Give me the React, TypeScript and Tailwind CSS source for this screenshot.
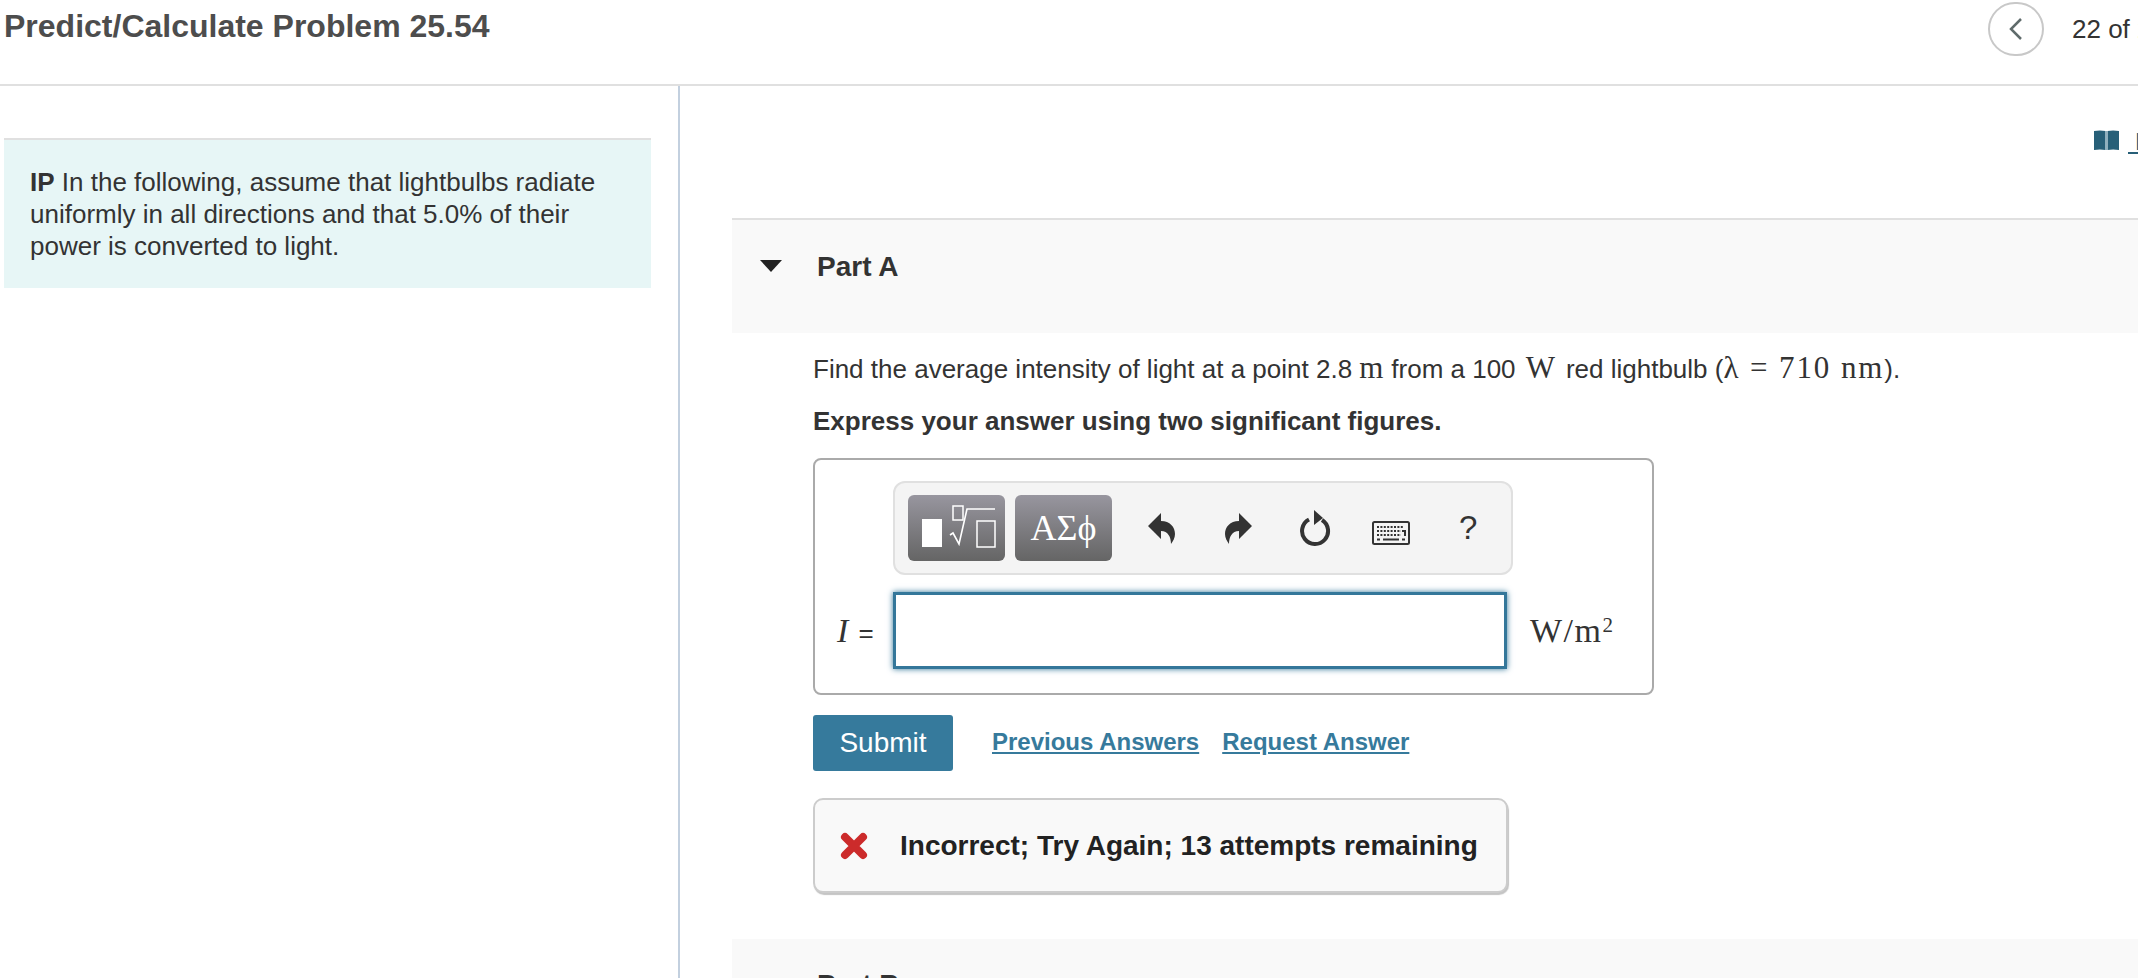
import React from 'react';

const sans = { fontFamily: '"Liberation Sans", Arial, sans-serif' };

const Serif = ({ children, className = '' }: { children: React.ReactNode; className?: string }) => (
  <span className={`font-['Liberation_Serif',serif] text-[31px] tracking-[0.6px] ${className}`}>{children}</span>
);

const UndoIcon = ({ flip = false }: { flip?: boolean }) => (
  <svg width="27" height="31" viewBox="0 0 27 31" className={flip ? '-scale-x-100' : ''}>
    <path d="M0 13 L13 0 L13 8 C22 8 27 14 27 21 C27 25 25 28 23 31 C23 24 20 18 13 18 L13 26 Z" fill="#333" />
  </svg>
);

const RefreshIcon = () => (
  <svg width="32" height="36" viewBox="0 0 32 36">
    <path d="M10 9.5 A13 13 0 1 0 23 10" fill="none" stroke="#333" strokeWidth="4" />
    <path d="M15 0 L24 8 L15 15 Z" fill="#333" />
  </svg>
);

const KeyboardIcon = () => (
  <svg width="38" height="24" viewBox="0 0 38 24">
    <rect x="1" y="1" width="36" height="22" rx="1.5" fill="#f4f4f4" stroke="#333" strokeWidth="2" />
    <path d="M5 6 H32 M5 10 H29 M5 14 H29" stroke="#333" strokeWidth="2" strokeDasharray="2 1.4" />
    <path d="M30 10 H33 V15 M11 18.5 H27 M5 18.5 H8 M30 18.5 H33" stroke="#333" strokeWidth="2" fill="none" />
  </svg>
);

const MathIcon = () => (
  <svg width="97" height="66" viewBox="0 0 97 66">
    <rect x="14" y="24" width="20" height="28" fill="#fff" />
    <rect x="45" y="11" width="10" height="14" fill="none" stroke="#fff" strokeWidth="1.5" />
    <path d="M42 40 L45 38 L51 49 L59 14 H87" fill="none" stroke="#fff" strokeWidth="1.6" />
    <rect x="69" y="26" width="18" height="26" fill="none" stroke="#fff" strokeWidth="1.5" />
  </svg>
);

const CrossIcon = () => (
  <svg width="28" height="28" viewBox="0 0 28 28" className="shrink-0">
    <path d="M5 5 L23 23 M23 5 L5 23" stroke="#cc2b2b" strokeWidth="8" strokeLinecap="round" />
  </svg>
);

const App = () => {
  return (
    <div className="w-[2138px] h-[978px] overflow-hidden bg-white flex flex-col text-[#333]" style={sans}>
      <header className="h-[86px] shrink-0 border-b-2 border-[#e0e0e0] flex items-start justify-between pl-[4px]">
        <h1 className="mt-[9px] text-[32px] leading-[34px] font-bold text-[#4d4d4d] whitespace-nowrap">
          Predict/Calculate Problem 25.54
        </h1>
        <div className="flex items-center shrink-0 w-[150px] mt-[2px]">
          <button className="w-[56px] h-[54px] shrink-0 rounded-full border-2 border-[#c8c8c8] flex items-center justify-center">
            <svg width="16" height="24" viewBox="0 0 16 24">
              <path d="M13 2 L3 12 L13 22" fill="none" stroke="#5f6b6b" strokeWidth="2.5" />
            </svg>
          </button>
          <span className="ml-[28px] text-[26px] whitespace-nowrap">22 of 24</span>
        </div>
      </header>

      <div className="flex flex-1 min-h-0">
        <aside className="w-[680px] shrink-0 border-r-2 border-[#c3d0df] pl-[4px] pr-[27px] pt-[52px]">
          <div className="h-[150px] border-t-2 border-[#e0e0e0] bg-[#e7f6f6] pl-[26px] pr-[40px] pt-[26px] text-[26px] leading-[32px]">
            <b>IP</b> In the following, assume that lightbulbs radiate uniformly in all directions and that 5.0% of their power is converted to light.
          </div>
        </aside>

        <main className="flex-1 min-w-0 pl-[52px] flex flex-col">
          <div className="h-[132px] shrink-0 pt-[44px] flex justify-end items-start">
            <div className="w-[44px] flex items-start gap-[9px] shrink-0">
              <svg width="25" height="20" viewBox="0 0 25 20" className="shrink-0">
                <path d="M0 1 Q6 0 11.5 1 V20 Q6 19 0 20 Z M13.5 1 Q19 0 25 1 V20 Q19 19 13.5 20 Z" fill="#275f78" />
                <path d="M11.5 1 H13.5 V20 H11.5 Z" fill="#8fb0bf" />
              </svg>
              <span className="text-[#275f78] underline text-[24px] leading-[24px] whitespace-nowrap">&nbsp;Instructions</span>
            </div>
          </div>

          <section className="h-[115px] shrink-0 border-t-2 border-[#e0e0e0] bg-[#f9f9f9] flex items-start pl-[28px] pt-[30px]">
            <svg width="22" height="12" viewBox="0 0 22 12" className="mt-[10px] shrink-0">
              <path d="M0 0 H22 L11 12 Z" fill="#222" />
            </svg>
            <h2 className="ml-[35px] text-[28px] leading-[34px] font-bold text-[#333] whitespace-nowrap">Part A</h2>
          </section>

          <div className="pl-[81px] pt-[15px] w-[1000px]">
            <p className="text-[26px] leading-[40px] whitespace-nowrap">
              Find the average intensity of light at a point 2.8 <Serif>m</Serif> from a 100 <Serif className="mx-[3px]">W</Serif> red lightbulb (<Serif className="tracking-[1.9px]">λ = 710 nm</Serif>).
            </p>
            <p className="mt-[12px] text-[26px] leading-[40px] font-bold whitespace-nowrap">Express your answer using two significant figures.</p>

            <div className="mt-[17px] w-[841px] h-[237px] border-2 border-[#aaa] rounded-[8px] pl-[78px] pt-[21px]">
              <div className="w-[620px] h-[94px] bg-[#f4f4f4] border-2 border-[#e0e0e0] rounded-[12px] flex items-center pl-[13px]">
                <button className="w-[97px] h-[66px] shrink-0 rounded-[6px] bg-gradient-to-b from-[#98969f] to-[#656565]">
                  <MathIcon />
                </button>
                <button className="ml-[10px] w-[97px] h-[66px] shrink-0 rounded-[6px] bg-gradient-to-b from-[#98969f] to-[#656565] text-white font-['Liberation_Serif',serif] text-[36px] flex items-center justify-center">
                  ΑΣϕ
                </button>
                <div className="ml-[36px] w-[27px] flex justify-center"><UndoIcon /></div>
                <div className="ml-[50px] w-[27px] flex justify-center"><UndoIcon flip /></div>
                <div className="ml-[47px] w-[32px] flex justify-center"><RefreshIcon /></div>
                <div className="ml-[41px] mt-[10px] w-[38px] flex justify-center"><KeyboardIcon /></div>
                <span className="ml-[49px] text-[33px]">?</span>
              </div>

              <div className="mt-[17px] flex items-center -ml-[59px]">
                <div className="w-[59px] pl-[3px] text-[26px] whitespace-nowrap">
                  <i className="font-['Liberation_Serif',serif] text-[34px] mr-[3px]">I</i> =
                </div>
                <input
                  readOnly
                  className="w-[614px] h-[77px] bg-white border-[3px] border-[#34779a] shadow-[0_0_6px_#34779a] outline-none"
                />
                <div className="ml-[23px] font-['Liberation_Serif',serif] text-[34px] tracking-[1.5px] whitespace-nowrap">
                  W/m<sup className="text-[21px]">2</sup>
                </div>
              </div>
            </div>

            <div className="mt-[20px] flex items-center">
              <button className="w-[140px] h-[56px] bg-[#367a9c] rounded-[3px] text-white text-[28px]">Submit</button>
              <a className="ml-[39px] -mt-[3px] text-[#367a9c] font-bold underline text-[24px] whitespace-nowrap">Previous Answers</a>
              <a className="ml-[23px] -mt-[3px] text-[#367a9c] font-bold underline text-[24px] whitespace-nowrap">Request Answer</a>
            </div>

            <div className="mt-[27px] w-[695px] h-[95px] bg-[#f9f9f9] border-2 border-[#ccc] rounded-[10px] shadow-[1px_2px_1px_#c4c4c4] flex items-center pl-[25px]">
              <CrossIcon />
              <span className="ml-[32px] text-[28px] font-bold text-[#222] whitespace-nowrap">Incorrect; Try Again; 13 attempts remaining</span>
            </div>
          </div>

          <section className="mt-[46px] h-[60px] shrink-0 bg-[#f9f9f9] pl-[85px] pt-[29px]">
            <h2 className="text-[28px] leading-[34px] font-bold text-[#333]">Part B</h2>
          </section>
        </main>
      </div>
    </div>
  );
};

export default App;
